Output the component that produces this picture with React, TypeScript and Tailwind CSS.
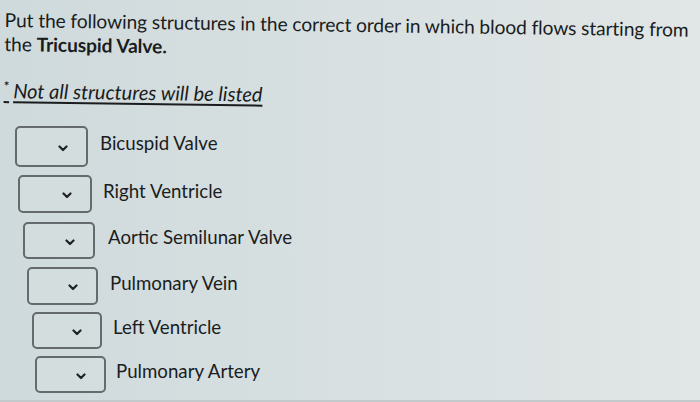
import React from "react";

type Row = {
  label: string;
  boxClass: string;
  labelClass: string;
  rowClass: string;
};

const rows: Row[] = [
  { label: "Bicuspid Valve", rowClass: "mt-0 pl-[15px]", boxClass: "w-[73px] h-[41px]", labelClass: "ml-[12px]" },
  { label: "Right Ventricle", rowClass: "mt-[8px] pl-[18px]", boxClass: "w-[74px] h-[38px]", labelClass: "ml-[11px]" },
  { label: "Aortic Semilunar Valve", rowClass: "mt-[9px] pl-[23px]", boxClass: "w-[72px] h-[37px]", labelClass: "ml-[13px]" },
  { label: "Pulmonary Vein", rowClass: "mt-[8px] pl-[27px]", boxClass: "w-[71px] h-[38px]", labelClass: "ml-[12px]" },
  { label: "Left Ventricle", rowClass: "mt-[7px] pl-[32px]", boxClass: "w-[70px] h-[37px]", labelClass: "ml-[11px]" },
  { label: "Pulmonary Artery", rowClass: "mt-[7px] pl-[35px]", boxClass: "w-[71px] h-[37px]", labelClass: "ml-[10px]" },
];

function Chevron() {
  return (
    <svg width="10" height="7" viewBox="0 0 10 7" className="block">
      <polyline points="1.5,1.5 5,5 8.5,1.5" fill="none" stroke="#1f2224" strokeWidth="2.2" strokeLinecap="round" strokeLinejoin="round" />
    </svg>
  );
}

export default function App() {
  return (
    <div
      className="w-[700px] h-[402px] overflow-hidden bg-gradient-to-r from-[#cfdadc] via-[#d8e0e1] to-[#e1e6e6] text-[#1a1c1d] border-b-[2px] border-[#c3cacc]"
      style={{ fontFamily: "Lato, 'Noto Sans', sans-serif" }}
    >
      <div className="pl-[5px] pt-[8px] origin-top-left rotate-[0.8deg]">
        <p className="text-[19.2px] leading-[24px] tracking-[-0.1px]">
          Put the following structures in the correct order in which blood flows starting from
          <br />
          the <span className="font-bold">Tricuspid Valve.</span>
        </p>
        <p className="mt-[22px] text-[20px] leading-[24px] italic underline underline-offset-[3px] decoration-[1.5px]">
          <span className="not-italic font-bold align-top text-[13px] leading-[16px] mr-[4px]">*</span>Not all structures will be listed
        </p>
      </div>
      <div className="mt-[24px] flex flex-col">
        {rows.map((r) => (
          <div key={r.label} className={`flex items-center ${r.rowClass}`}>
            <div
              className={`${r.boxClass} shrink-0 rounded-[5px] border-[2px] border-[#656a6c] bg-[#d8e0e1]/40 flex items-center justify-end pr-[18px] pt-[3px]`}
            >
              <Chevron />
            </div>
            <span className={`${r.labelClass} text-[18.7px] leading-[23px] pb-[6px]`}>{r.label}</span>
          </div>
        ))}
      </div>
    </div>
  );
}
